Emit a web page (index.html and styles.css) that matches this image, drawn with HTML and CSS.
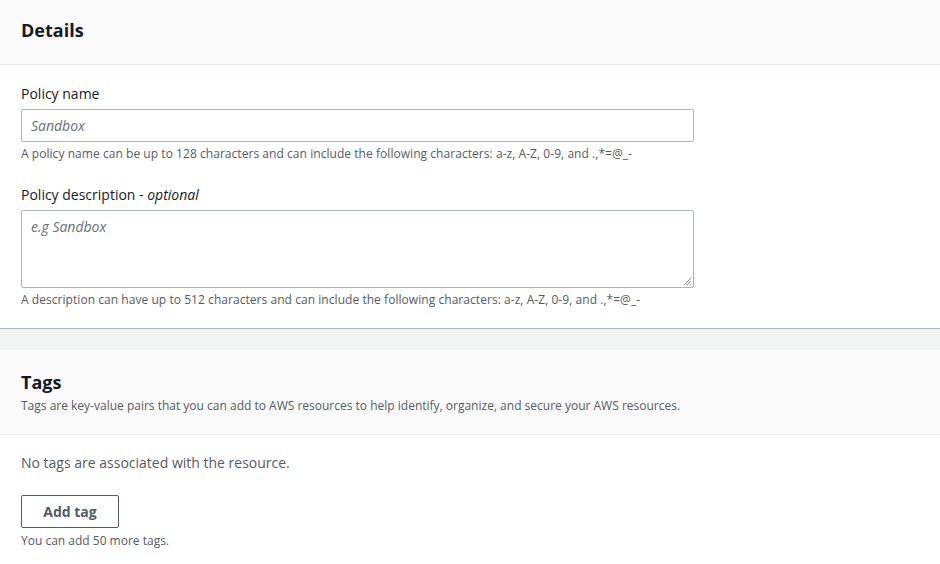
FILE: index.html
```html
<!DOCTYPE html>
<html>
<head>
<meta charset="utf-8">
<link rel="stylesheet" href="styles.css">
</head>
<body>
<section class="panel">
  <header class="panel-head details-head">
    <h2 class="title">Details</h2>
  </header>
  <div class="panel-body details-body">
    <div class="field">
      <label class="label">Policy name</label>
      <div class="input"><span class="placeholder">Sandbox</span></div>
      <p class="hint">A policy name can be up to 128 characters and can include the following characters: a-z, A-Z, 0-9, and .,*=@_-</p>
    </div>
    <div class="field">
      <label class="label">Policy description - <i>optional</i></label>
      <div class="textarea"><span class="placeholder">e.g Sandbox</span>
        <svg class="grip" width="9" height="9" viewBox="0 0 9 9"><path d="M8 1 L1 8 M8 4 L4 8 M8 7 L7 8" stroke="#8a9399" stroke-width="1" fill="none"/></svg>
      </div>
      <p class="hint">A description can have up to 512 characters and can include the following characters: a-z, A-Z, 0-9, and .,*=@_-</p>
    </div>
  </div>
</section>
<div class="gap"></div>
<section class="panel">
  <header class="panel-head tags-head">
    <h2 class="title">Tags</h2>
    <p class="desc">Tags are key-value pairs that you can add to AWS resources to help identify, organize, and secure your AWS resources.</p>
  </header>
  <div class="panel-body tags-body">
    <p class="empty">No tags are associated with the resource.</p>
    <button class="btn">Add tag</button>
    <p class="hint">You can add 50 more tags.</p>
  </div>
</section>
</body>
</html>
```
FILE: styles.css
```css
* { box-sizing: border-box; }
html, body { margin: 0; padding: 0; background: #fff; }
body {
  width: 940px;
  height: 564px;
  overflow: hidden;
  font-family: "Open Sans", "Noto Sans", Arial, sans-serif;
  color: #16191f;
}
.panel { background: #fff; }
.panel-head {
  background: #fafafa;
  border-bottom: 1px solid #eaeded;
  padding: 0 21px;
}
.details-head { height: 65px; padding-top: 17px; }
.title {
  margin: 0;
  font-size: 18px;
  font-weight: 700;
  line-height: 26px;
  color: #16191f;
}
.details-body {
  padding: 18px 21px 0;
  height: 264px;
  border-bottom: 1px solid #aab7b8;
}
.field { display: flex; flex-direction: column; }
.field + .field { margin-top: 22px; }
.label {
  font-size: 14px;
  line-height: 22px;
  color: #16191f;
  margin-bottom: 4px;
}
.input, .textarea {
  width: 673px;
  border: 1px solid #aab7b8;
  border-radius: 2px;
  background: #fff;
  padding: 0 9px;
  font-size: 14px;
}
.input { height: 33px; line-height: 31px; }
.textarea { height: 78px; line-height: 20px; padding-top: 6px; position: relative; }
.grip { position: absolute; right: 1px; bottom: 1px; }
.placeholder { font-style: italic; color: #687078; }
.hint {
  margin: 4px 0 0;
  font-size: 12px;
  line-height: 16px;
  color: #545b64;
  letter-spacing: 0.05px;
}
.gap { height: 21px; background: #f2f3f3; }
.tags-head { height: 85px; padding-top: 19px; }
.desc {
  margin: 3px 0 0;
  font-size: 12px;
  line-height: 16px;
  color: #545b64;
}
.tags-body { padding: 17px 21px 0; }
.empty {
  margin: 0;
  font-size: 14px;
  line-height: 22px;
  color: #545b64;
}
.btn {
  margin-top: 21px;
  display: block;
  width: 98px;
  height: 33px;
  border: 1px solid #545b64;
  border-radius: 2px;
  background: #fff;
  font-family: inherit;
  font-size: 14px;
  font-weight: 700;
  color: #545b64;
  padding: 0;
}
.tags-body .hint { margin-top: 5px; letter-spacing: 0; }
```
